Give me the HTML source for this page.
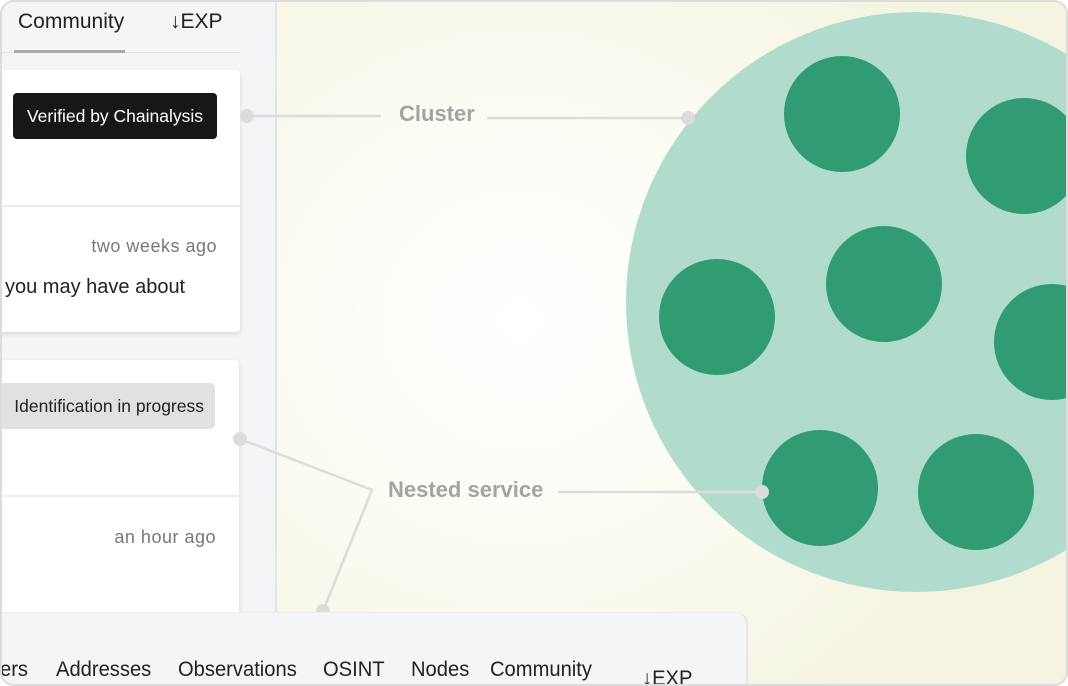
<!DOCTYPE html>
<html><head><meta charset="utf-8"><style>
*{margin:0;padding:0;box-sizing:border-box}
body{width:1068px;height:686px;overflow:hidden;background:#fff;font-family:"Liberation Sans",sans-serif;position:relative}
.frame{position:absolute;left:0;top:0;width:1068px;height:686px;border-radius:14px;overflow:hidden;
background:radial-gradient(ellipse 520px 480px at 520px 320px,#ffffff 0%,#fbfbf3 50%,#f5f4e0 100%)}
.ov{position:absolute;left:0;top:0;width:1068px;height:686px;border:2px solid #dcdcdc;border-radius:14px;pointer-events:none}
.left{position:absolute;left:0;top:0;width:277px;height:686px;background:#f4f5f7;border-right:2px solid #e3e3e3}
.abs{position:absolute;white-space:nowrap}
.card{position:absolute;background:#fff;box-shadow:0 2px 5px rgba(0,0,0,.12);border-radius:0 4px 4px 0}
.div{position:absolute;left:0;height:2px;background:#ececec}
.bottom{position:absolute;left:0;top:612px;width:748px;height:80px;background:#f4f5f7;border-radius:0 12px 0 0;border-right:2px solid #e6e6e6;border-top:1px solid #eee}
.bt{position:absolute;top:658px;font-size:21px;color:#222;transform:scaleX(.96);transform-origin:left;white-space:nowrap}
.lbl{position:absolute;font-weight:bold;color:#a3a3a3;font-size:22px;white-space:nowrap}
</style></head><body>
<div class="frame">
<div class="left">
 <div class="abs" style="left:18px;top:10px;font-size:21px;color:#222">Community</div>
 <div class="abs" style="left:170px;top:10px;font-size:21px;color:#222">↓EXP</div>
 <div style="position:absolute;left:0;top:52px;width:240px;height:1px;background:#e2e2e2"></div>
 <div style="position:absolute;left:14px;top:50px;width:111px;height:3px;background:#aaa"></div>
 <div class="card" style="left:0;top:70px;width:240px;height:262px">
  <div class="abs" style="left:13px;top:23px;width:204px;height:46px;background:#171717;border-radius:4px;color:#fff;font-size:17.5px;line-height:46px;text-align:center">Verified by Chainalysis</div>
  <div class="div" style="top:135px;width:240px"></div>
  <div class="abs" style="right:23px;top:166px;font-size:18px;color:#777;letter-spacing:.5px">two weeks ago</div>
  <div class="abs" style="left:5px;top:206px;font-size:20px;color:#222">you may have about</div>
 </div>
 <div class="card" style="left:0;top:360px;width:239px;height:260px">
  <div class="abs" style="left:-10px;top:23px;width:225px;height:46px;background:#e1e1e1;border-radius:5px;color:#222;font-size:17.5px;line-height:46px;text-align:right;padding-right:11px">Identification in progress</div>
  <div class="div" style="top:135px;width:239px"></div>
  <div class="abs" style="right:23px;top:167px;font-size:18px;color:#777;letter-spacing:.5px">an hour ago</div>
 </div>
</div>
<svg style="position:absolute;left:0;top:0" width="1068" height="686">
 <circle cx="916" cy="302" r="290" fill="#b1dccd"/>
 <g fill="#319b74">
  <circle cx="842" cy="114" r="58"/><circle cx="1024" cy="156" r="58"/>
  <circle cx="884" cy="284" r="58"/><circle cx="717" cy="317" r="58"/>
  <circle cx="1052" cy="342" r="58"/><circle cx="820" cy="488" r="58"/>
  <circle cx="976" cy="492" r="58"/>
 </g>
 <g stroke="#dcdcdc" stroke-width="2.5" fill="none">
  <line x1="247" y1="116" x2="381" y2="116"/><line x1="487" y1="118" x2="688" y2="118"/>
  <polyline points="240,439 372,490 323,611"/><line x1="558" y1="492" x2="762" y2="492"/>
 </g>
 <g fill="#dcdcdc">
  <circle cx="247" cy="116" r="7"/><circle cx="688" cy="118" r="7"/>
  <circle cx="240" cy="439" r="7"/><circle cx="762" cy="492" r="7"/><circle cx="323" cy="611" r="7"/>
 </g>
</svg>
<div class="lbl" style="left:399px;top:101px">Cluster</div>
<div class="lbl" style="left:388px;top:477px">Nested service</div>
<div class="bottom"></div>
<div class="bt" style="left:0">ers</div>
<div class="bt" style="left:56px">Addresses</div>
<div class="bt" style="left:178px">Observations</div>
<div class="bt" style="left:323px">OSINT</div>
<div class="bt" style="left:411px">Nodes</div>
<div class="bt" style="left:490px">Community</div>
<div class="bt" style="left:642px;top:667px">↓EXP</div>
</div>
<div class="ov"></div>
</body></html>
